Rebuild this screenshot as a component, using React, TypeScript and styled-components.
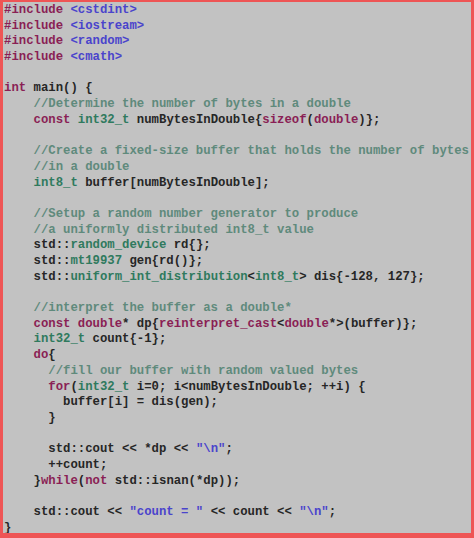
import React from "react";
import styled, { createGlobalStyle } from "styled-components";

const Global = createGlobalStyle`
  html, body { margin: 0; padding: 0; background: #c2c2c2; }
`;

type Kind = "p" | "k" | "t" | "c" | "s";

const colors: Record<Kind, string> = {
  p: "#262626",
  k: "#8a1f55",
  t: "#2f7a5e",
  c: "#5f8a7c",
  s: "#4a44cc",
};

const Frame = styled.div`
  box-sizing: border-box;
  width: 474px;
  height: 538px;
  background: #c2c2c2;
  border-style: solid;
  border-color: #ee5555;
  border-width: 2px 3px 5px 3px;
  overflow: hidden;
`;

const Code = styled.pre`
  margin: 0;
  padding: 1px 0 0 1px;
  font-family: "Liberation Mono", "Courier New", monospace;
  font-size: 12.3px;
  line-height: 15.7px;
  font-weight: bold;
  white-space: pre;
`;

const Line = styled.div`
  height: 15.7px;
`;

const Tok = styled.span<{ $kind: Kind }>`
  color: ${(p) => colors[p.$kind]};
`;

type T = [Kind, string];
const L = (...toks: T[]): T[] => toks;

const lines: T[][] = [
  L(["k", "#include"], ["p", " "], ["s", "<cstdint>"]),
  L(["k", "#include"], ["p", " "], ["s", "<iostream>"]),
  L(["k", "#include"], ["p", " "], ["s", "<random>"]),
  L(["k", "#include"], ["p", " "], ["s", "<cmath>"]),
  L(),
  L(["k", "int"], ["p", " main() {"]),
  L(["c", "    //Determine the number of bytes in a double"]),
  L(["p", "    "], ["k", "const"], ["p", " "], ["t", "int32_t"], ["p", " numBytesInDouble{"], ["k", "sizeof"], ["p", "("], ["k", "double"], ["p", ")};"]),
  L(),
  L(["c", "    //Create a fixed-size buffer that holds the number of bytes"]),
  L(["c", "    //in a double"]),
  L(["p", "    "], ["t", "int8_t"], ["p", " buffer[numBytesInDouble];"]),
  L(),
  L(["c", "    //Setup a random number generator to produce"]),
  L(["c", "    //a uniformly distributed int8_t value"]),
  L(["p", "    std::"], ["t", "random_device"], ["p", " rd{};"]),
  L(["p", "    std::"], ["t", "mt19937"], ["p", " gen{rd()};"]),
  L(["p", "    std::"], ["t", "uniform_int_distribution"], ["p", "<"], ["t", "int8_t"], ["p", "> dis{-128, 127};"]),
  L(),
  L(["c", "    //interpret the buffer as a double*"]),
  L(["p", "    "], ["k", "const"], ["p", " "], ["k", "double"], ["p", "* dp{"], ["k", "reinterpret_cast"], ["p", "<"], ["k", "double"], ["p", "*>(buffer)};"]),
  L(["p", "    "], ["t", "int32_t"], ["p", " count{-1};"]),
  L(["p", "    "], ["k", "do"], ["p", "{"]),
  L(["c", "      //fill our buffer with random valued bytes"]),
  L(["p", "      "], ["k", "for"], ["p", "("], ["t", "int32_t"], ["p", " i=0; i<numBytesInDouble; ++i) {"]),
  L(["p", "        buffer[i] = dis(gen);"]),
  L(["p", "      }"]),
  L(),
  L(["p", "      std::cout << *dp << "], ["s", "\"\\n\""], ["p", ";"]),
  L(["p", "      ++count;"]),
  L(["p", "    }"], ["k", "while"], ["p", "("], ["k", "not"], ["p", " std::isnan(*dp));"]),
  L(),
  L(["p", "    std::cout << "], ["s", "\"count = \""], ["p", " << count << "], ["s", "\"\\n\""], ["p", ";"]),
  L(["p", "}"]),
];

export default function App() {
  return (
    <>
      <Global />
      <Frame>
        <Code>
          {lines.map((toks, i) => (
            <Line key={i}>
              {toks.length === 0
                ? " "
                : toks.map(([k, text], j) => (
                    <Tok key={j} $kind={k}>
                      {text}
                    </Tok>
                  ))}
            </Line>
          ))}
        </Code>
      </Frame>
    </>
  );
}
